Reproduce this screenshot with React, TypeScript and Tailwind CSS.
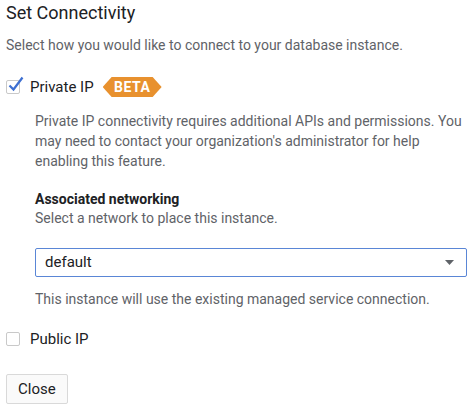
import React from 'react';

function CheckBox({ checked }: { checked?: boolean }) {
  return (
    <span className="relative inline-block h-[14px] w-[14px] shrink-0 rounded-[2px] border border-[#c9c9c9] bg-white">
      {checked ? (
        <svg
          className="absolute left-[1px] top-[-5px]"
          width="16"
          height="16"
          viewBox="0 0 16 16"
          fill="none"
        >
          <path d="M1.5 9.5 L5.5 13.5 L14.5 1.5" stroke="#3d6fd1" strokeWidth="2.2" />
        </svg>
      ) : null}
    </span>
  );
}

export default function App() {
  return (
    <div
      className="min-h-[410px] w-[474px] bg-white pl-[6px] pr-[7px] text-[#5f6368]"
      style={{ fontFamily: 'Roboto, "Helvetica Neue", Arial, sans-serif' }}
    >
      <h2 className="pt-[1px] text-[18px] leading-[24px] text-[#202124]">Set Connectivity</h2>
      <p className="mt-[10px] text-[14px] leading-[20px]">
        Select how you would like to connect to your database instance.
      </p>

      <label className="mt-[22px] flex items-center">
        <CheckBox checked />
        <span className="ml-[10px] text-[15px] leading-[20px] text-[#202124]">Private IP</span>
        <span
          className="ml-[9px] flex h-[20px] w-[59px] items-center justify-center bg-[#e8912e] text-[14px] font-bold tracking-[0.5px] text-white"
          style={{ clipPath: 'polygon(9px 0, calc(100% - 9px) 0, 100% 50%, calc(100% - 9px) 100%, 9px 100%, 0 50%)' }}
        >
          BETA
        </span>
      </label>

      <div className="pl-[29px]">
        <p className="mt-[14px] text-[14px] leading-[20px]">
          Private IP connectivity requires additional APIs and permissions. You may need to contact
          your organization's administrator for help enabling this feature.
        </p>

        <div className="mt-[18px] text-[14px] font-bold leading-[20px] text-[#202124]">
          Associated networking
        </div>
        <div className="text-[14px] leading-[18px]">Select a network to place this instance.</div>

        <div className="mt-[21px] flex h-[29px] items-center justify-between rounded-[2px] border border-[#5a86d6] pl-[9px] pr-[12px]">
          <span className="text-[15px] text-[#202124]">default</span>
          <svg width="9" height="5" viewBox="0 0 9 5">
            <path d="M0 0 H9 L4.5 5 Z" fill="#5f6368" />
          </svg>
        </div>

        <p className="mt-[12px] text-[14px] leading-[20px]">
          This instance will use the existing managed service connection.
        </p>
      </div>

      <label className="mt-[20px] flex items-center">
        <CheckBox />
        <span className="ml-[10px] text-[15px] leading-[20px] text-[#202124]">Public IP</span>
      </label>

      <button className="mt-[25px] h-[30px] rounded-[2px] border border-[#d9d9d9] bg-[#fafafa] px-[11px] text-[15px] text-[#202124]">
        Close
      </button>
    </div>
  );
}
